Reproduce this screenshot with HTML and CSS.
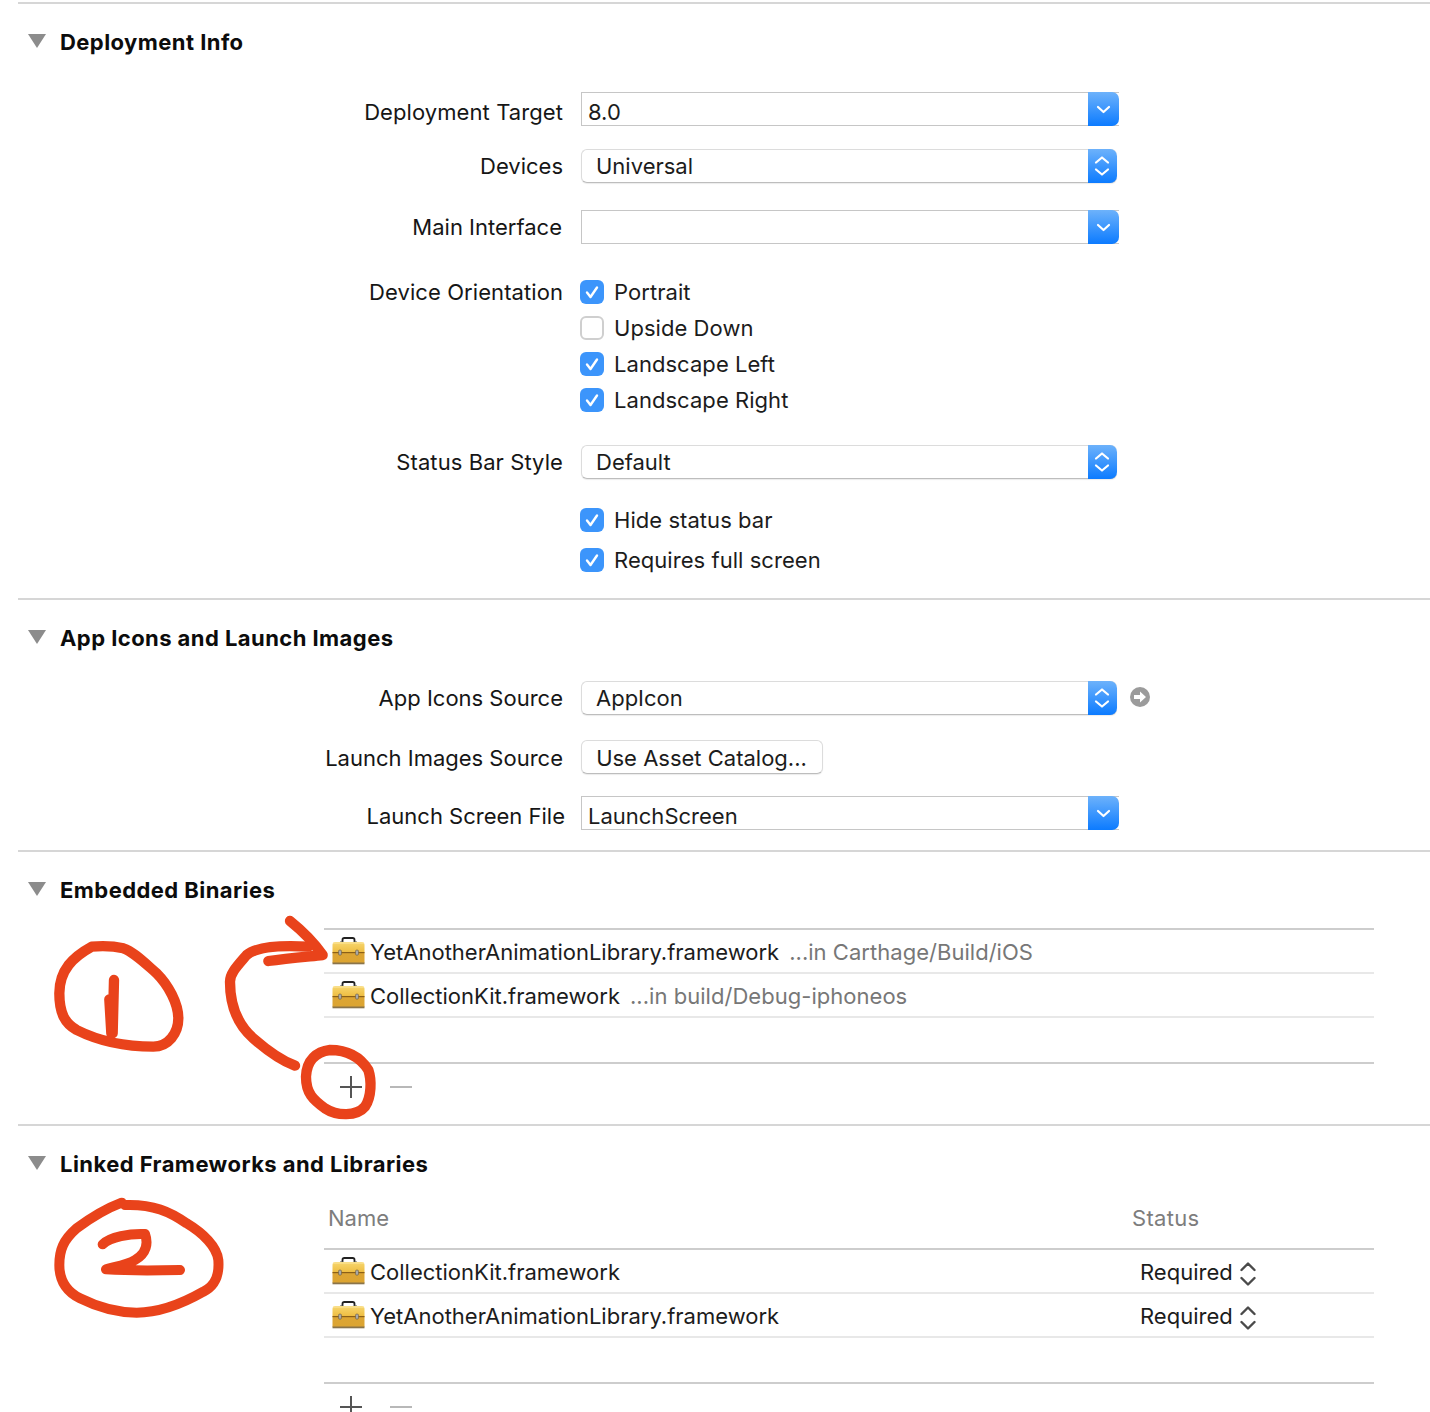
FILE: index.html
```html
<!DOCTYPE html>
<html lang="en">
<head>
<meta charset="utf-8">
<title>Deployment Info</title>
<link rel="stylesheet" href="styles.css">
</head>
<body>
<svg width="0" height="0" class="defs">
  <defs>
    <symbol id="toolbox" viewBox="0 0 33 28">
      <path d="M10.500 6V2.800C10.500 1.700 11.200 1 12.300 1h8.400c1.100 0 1.800.7 1.800 1.800V6" fill="none" stroke="#222" stroke-width="1.800"/>
      <path d="M8 5.500h3v-1H8zM22 5.500h3v-1h-3z" fill="#555"/>
      <path d="M3.500 5h26C31.500 5 32.500 6.300 32.500 8v18H.5V8C.5 6.300 1.500 5 3.500 5z" fill="url(#boxg)"/>
      <rect x="1" y="5.500" width="31" height="1" fill="#fbe7a4"/>
      <rect x=".5" y="25.500" width="32" height="1.800" fill="#8a744a"/>
      <rect x=".5" y="15" width="32" height="1.200" fill="#8a5f17"/>
      <rect x="6.500" y="13" width="3" height="5.200" rx="1.300" fill="#a8a8a8" stroke="#6d5a35" stroke-width=".6"/>
      <rect x="23.500" y="13" width="3" height="5.200" rx="1.300" fill="#a8a8a8" stroke="#6d5a35" stroke-width=".6"/>
    </symbol>
    <linearGradient id="boxg" x1="0" y1="0" x2="0" y2="1">
      <stop offset="0" stop-color="#f7d76f"/>
      <stop offset=".45" stop-color="#efbf45"/>
      <stop offset=".5" stop-color="#dca534"/>
      <stop offset="1" stop-color="#dca431"/>
    </linearGradient>
    <symbol id="chev" viewBox="0 0 30 34">
      <path d="M9.500 15l5.500 5 5.500-5" fill="none" stroke="#fff" stroke-width="2.200" stroke-linecap="round" stroke-linejoin="round"/>
    </symbol>
    <symbol id="updown" viewBox="0 0 29 34">
      <path d="M8 13.500l6-5 6 5M8 20.500l6 5 6-5" fill="none" stroke="#fff" stroke-width="2.200" stroke-linecap="round" stroke-linejoin="round"/>
    </symbol>
    <symbol id="check" viewBox="0 0 24 24">
      <path d="M7 12.500l3.500 4.500L17 7.500" fill="none" stroke="#fff" stroke-width="2.400" stroke-linecap="round" stroke-linejoin="round"/>
    </symbol>
    <symbol id="stepper" viewBox="0 0 16 26">
      <path d="M1.500 9L8 2.500 14.500 9M1.500 17L8 23.500 14.500 17" fill="none" stroke="#4a4a4a" stroke-width="2.400" stroke-linecap="round" stroke-linejoin="round"/>
    </symbol>
  </defs>
</svg>

<main class="page">
  <section class="section section-first">
    <h2 class="head"><span class="tri"></span>Deployment Info</h2>
    <div class="row mt12">
      <label class="label low wide">Deployment Target</label>
      <div class="combo"><span class="value">8.0</span><span class="blue"><svg class="glyph"><use href="#chev"/></svg></span></div>
    </div>
    <div class="row mt23">
      <label class="label">Devices</label>
      <div class="popup"><span class="value">Universal</span><span class="blue"><svg class="glyph"><use href="#updown"/></svg></span></div>
    </div>
    <div class="row mt27">
      <label class="label nudge-left">Main Interface</label>
      <div class="combo"><span class="value"></span><span class="blue"><svg class="glyph"><use href="#chev"/></svg></span></div>
    </div>
    <div class="row checks-row mt30">
      <label class="label check-label wide">Device Orientation</label>
      <div class="checks">
        <div class="check"><span class="box on"><svg class="tick"><use href="#check"/></svg></span>Portrait</div>
        <div class="check"><span class="box"></span>Upside Down</div>
        <div class="check"><span class="box on"><svg class="tick"><use href="#check"/></svg></span>Landscape Left</div>
        <div class="check"><span class="box on"><svg class="tick"><use href="#check"/></svg></span>Landscape Right</div>
      </div>
    </div>
    <div class="row mt27">
      <label class="label wide">Status Bar Style</label>
      <div class="popup"><span class="value">Default</span><span class="blue"><svg class="glyph"><use href="#updown"/></svg></span></div>
    </div>
    <div class="row checks-row mt21">
      <span class="label"></span>
      <div class="checks tall">
        <div class="check"><span class="box on"><svg class="tick"><use href="#check"/></svg></span>Hide status bar</div>
        <div class="check"><span class="box on"><svg class="tick"><use href="#check"/></svg></span>Requires full screen</div>
      </div>
    </div>
    <div class="pad18"></div>
  </section>

  <section class="section">
    <h2 class="head"><span class="tri"></span>App Icons and Launch Images</h2>
    <div class="row mt5">
      <label class="label">App Icons Source</label>
      <div class="popup"><span class="value">AppIcon</span><span class="blue"><svg class="glyph"><use href="#updown"/></svg></span></div>
      <svg class="go" viewBox="0 0 20 20" width="20" height="20">
        <circle cx="10" cy="10" r="10" fill="#9b9b9b"/>
        <path d="M4 8h6V4.500l6 5.500-6 5.500V12H4z" fill="#fff"/>
      </svg>
    </div>
    <div class="row mt25">
      <label class="label low-1">Launch Images Source</label>
      <button class="button">Use Asset Catalog...</button>
    </div>
    <div class="row mt22">
      <label class="label low nudge-right">Launch Screen File</label>
      <div class="combo"><span class="value">LaunchScreen</span><span class="blue"><svg class="glyph"><use href="#chev"/></svg></span></div>
    </div>
    <div class="pad20"></div>
  </section>

  <section class="section">
    <h2 class="head"><span class="tri"></span>Embedded Binaries</h2>
    <div class="table">
      <div class="tr"><svg class="box-icon"><use href="#toolbox"/></svg><span class="name">YetAnotherAnimationLibrary.framework</span><span class="path">...in Carthage/Build/iOS</span></div>
      <div class="tr"><svg class="box-icon"><use href="#toolbox"/></svg><span class="name">CollectionKit.framework</span><span class="path">...in build/Debug-iphoneos</span></div>
      <div class="empty"></div>
      <div class="tools"><span class="plus"></span><span class="minus"></span></div>
    </div>
    <div class="pad14"></div>
  </section>

  <section class="section">
    <h2 class="head"><span class="tri"></span>Linked Frameworks and Libraries</h2>
    <div class="table table-plain">
      <div class="thead"><span class="th-name">Name</span><span class="th-status">Status</span></div>
      <div class="tr"><svg class="box-icon"><use href="#toolbox"/></svg><span class="name grow">CollectionKit.framework</span><span class="status">Required<svg class="step"><use href="#stepper"/></svg></span></div>
      <div class="tr"><svg class="box-icon"><use href="#toolbox"/></svg><span class="name grow">YetAnotherAnimationLibrary.framework</span><span class="status">Required<svg class="step"><use href="#stepper"/></svg></span></div>
      <div class="empty"></div>
      <div class="tools"><span class="plus"></span><span class="minus"></span></div>
    </div>
  </section>
</main>

<svg class="ink" viewBox="0 0 1430 1412" width="1430" height="1412">
  <g transform="translate(40 910) scale(.33333)" fill="none" stroke="#e9431b" stroke-width="31" stroke-linecap="round" stroke-linejoin="round">
    <path d="M155 110C100 140 58 180 58 250C58 310 75 340 110 360C160 385 230 410 340 410C385 410 415 370 415 325C415 280 385 225 350 190C310 155 280 125 250 115C220 108 180 108 155 110Z"/>
    <path d="M222 210L218 370M208 268L214 370"/>
    <path d="M765 467C720 450 680 420 640 385C600 350 570 300 570 215C570 190 590 170 620 135C650 110 720 105 805 110"/>
    <path d="M750 33C790 65 820 95 848 135C800 140 740 145 685 153"/>
    <path d="M870 420C830 425 800 450 798 500C798 550 820 570 855 595C890 618 950 620 975 590C995 560 995 510 985 480C960 440 920 420 870 420Z"/>
  </g>
  <g transform="translate(40 1190) scale(.33333)" fill="none" stroke="#e9431b" stroke-width="30" stroke-linecap="round" stroke-linejoin="round">
    <path d="M245 38C200 55 150 85 110 115C70 150 58 180 58 225C58 270 80 305 120 325C170 350 230 368 290 368C350 368 420 345 490 305C530 285 538 250 535 210C530 170 490 130 440 100C390 65 340 42 255 45"/>
    <path d="M188 163C210 140 270 130 315 132C325 160 320 190 285 210C260 225 225 230 198 238C260 242 340 242 420 240"/>
  </g>
</svg>
</body>
</html>
```
FILE: styles.css
```css
html, body { margin: 0; padding: 0; background: #fff; }
body {
  position: relative;
  width: 1430px;
  height: 1412px;
  overflow: hidden;
  font-family: "Inter", "Roboto", "Liberation Sans", sans-serif;
  font-size: 22px;
  color: #1c1c1c;
}
.defs { position: absolute; }
.ink { position: absolute; left: 0; top: 0; pointer-events: none; }
.page { padding-top: 2px; }
.section { margin-left: 18px; border-top: 2px solid #d6d6d6; }
.head {
  display: flex;
  align-items: center;
  height: 76px;
  margin: 0;
  padding-left: 42px;
  position: relative;
  font-size: 22px;
  font-weight: 700;
  letter-spacing: .44px;
  color: #0c0c0c;
}
.tri {
  position: absolute;
  left: 10px;
  top: 30px;
  width: 0;
  height: 0;
  border-left: 9px solid transparent;
  border-right: 9px solid transparent;
  border-top: 14px solid #8c8c8c;
}
.row { display: flex; align-items: center; }
.checks-row { align-items: flex-start; }
.label {
  flex: none;
  width: 545px;
  margin-right: 18px;
  text-align: right;
  color: #161616;
  white-space: nowrap;
}
.wide { letter-spacing: .08px; }
.low { padding-top: 6px; }
.low-1 { padding-top: 2px; }
.nudge-left { position: relative; left: -1px; }
.nudge-right { position: relative; left: 2px; }
.check-label { line-height: 36px; }
.mt5 { margin-top: 5px; }
.mt12 { margin-top: 12px; }
.mt21 { margin-top: 21px; }
.mt22 { margin-top: 22px; }
.mt23 { margin-top: 23px; }
.mt25 { margin-top: 25px; }
.mt27 { margin-top: 27px; }
.mt30 { margin-top: 30px; }
.pad14 { height: 14px; }
.pad18 { height: 18px; }
.pad20 { height: 20px; }
.combo, .popup {
  display: flex;
  align-items: center;
  height: 34px;
  box-sizing: border-box;
  background: #fff;
}
.combo {
  width: 538px;
  border: 1px solid #c6c6c6;
  border-right: 0;
  padding-left: 6px;
}
.popup {
  width: 536px;
  border: 1px solid #dcdcdc;
  border-bottom-color: #bdbdbd;
  border-right: 0;
  border-radius: 6px;
  padding-left: 14px;
  box-shadow: 0 1px 1px rgba(0,0,0,.08);
}
.value { flex: 1; min-width: 0; line-height: 32px; color: #1c1c1c; }
.combo .value { padding-top: 6px; box-sizing: border-box; height: 32px; line-height: 26px; }
.blue {
  flex: none;
  width: 29px;
  height: 34px;
  margin: -1px 0;
  border-radius: 0 7px 7px 0;
  background: linear-gradient(#6db2fb, #0c7bff);
}
.combo .blue { width: 31px; }
.glyph { display: block; width: 100%; height: 34px; }
.check {
  display: flex;
  align-items: center;
  height: 36px;
  gap: 10px;
  margin-left: -1px;
  letter-spacing: .05px;
  color: #1c1c1c;
}
.tall .check { height: 40px; }
.box {
  flex: none;
  width: 24px;
  height: 24px;
  box-sizing: border-box;
  border: 2px solid #cfcfcf;
  border-radius: 6px;
  background: #fff;
}
.box.on { border: 0; background: #3c95fb; }
.tick { display: block; width: 24px; height: 24px; }
.go { margin-left: 13px; flex: none; position: relative; top: -1px; }
.button {
  width: 242px;
  height: 34px;
  padding: 2px 1px 0 0;
  box-sizing: border-box;
  border: 1px solid #dcdcdc;
  border-bottom-color: #bdbdbd;
  border-radius: 6px;
  background: #fff;
  box-shadow: 0 1px 1px rgba(0,0,0,.08);
  font: inherit;
  color: #1c1c1c;
}
.table { margin-left: 306px; width: 1050px; border-top: 2px solid #cdcdcd; }
.table-plain { border-top: 0; }
.tr {
  display: flex;
  align-items: center;
  height: 42px;
  border-bottom: 2px solid #e8e8e8;
  padding-left: 8px;
}
.box-icon { flex: none; width: 33px; height: 28px; margin-right: 5px; }
.name { padding-top: 2px; color: #1c1c1c; white-space: nowrap; }
.grow { flex: 1; }
.path { padding-top: 2px; margin-left: 10px; letter-spacing: .03px; color: #777; white-space: nowrap; }
.empty { height: 44px; border-bottom: 2px solid #cdcdcd; }
.tools { position: relative; display: flex; align-items: center; height: 46px; padding-left: 16px; gap: 28px; }
.plus { position: relative; display: block; width: 22px; height: 22px; }
.plus::before, .plus::after { content: ""; position: absolute; background: #555; }
.plus::before { left: 0; right: 0; top: 10px; height: 2px; }
.plus::after { top: 0; bottom: 0; left: 10px; width: 2px; }
.minus { display: block; width: 22px; height: 2px; background: #b8b8b8; }
.thead {
  display: flex;
  height: 46px;
  border-bottom: 2px solid #cdcdcd;
  line-height: 32px;
  color: #7d7d7d;
}
.th-name { width: 808px; padding-left: 4px; box-sizing: border-box; }
.th-status { letter-spacing: .3px; }
.status { display: flex; align-items: center; width: 234px; padding-top: 2px; box-sizing: border-box; color: #1c1c1c; }
.step { width: 16px; height: 26px; margin: 4px 0 0 7px; }
```
